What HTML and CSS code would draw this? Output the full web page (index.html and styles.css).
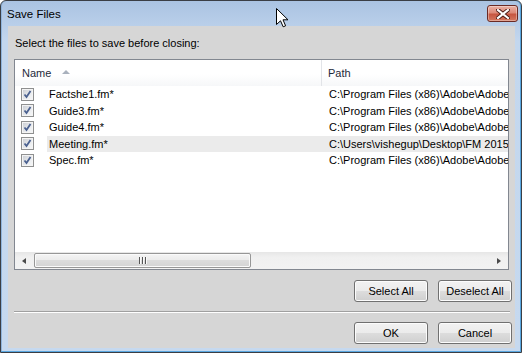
FILE: index.html
```html
<!DOCTYPE html>
<html lang="en">
<head>
  <meta charset="UTF-8">
  <title>Save Files</title>
  <link rel="stylesheet" href="styles.css">
</head>
<body>

  <div class="window">
    <div class="titlebar">
      <span class="title">Save Files</span>
      <button class="close-btn" type="button">
        <svg width="14" height="10" viewBox="0 0 14 10">
          <path d="M2 1 L12 9 M12 1 L2 9" stroke="#4a1a14" stroke-width="4" stroke-linecap="square"/>
          <path d="M2 1 L12 9 M12 1 L2 9" stroke="#fff" stroke-width="2.2" stroke-linecap="square"/>
        </svg>
      </button>
    </div>

    <div class="client">
      <p class="prompt">Select the files to save before closing:</p>

      <div class="listview">
        <div class="lv-header">
          <div class="col col-name">Name <span class="sort-arrow"></span></div>
          <div class="col col-path">Path</div>
        </div>

        <div class="lv-rows" id="rows"></div>

        <div class="hscroll">
          <span class="sb-btn sb-left"></span>
          <span class="sb-thumb">
            <svg width="8" height="7" viewBox="0 0 8 7">
              <path d="M0.5 0 V7 M3.5 0 V7 M6.5 0 V7" stroke="#555" stroke-width="1"/>
              <path d="M1.5 0 V7 M4.5 0 V7 M7.5 0 V7" stroke="#fafafa" stroke-width="1"/>
            </svg>
          </span>
          <span class="sb-track"></span>
          <span class="sb-btn sb-right"></span>
        </div>
      </div>

      <div class="btn-row">
        <button class="btn" type="button">Select All</button>
        <button class="btn" type="button">Deselect All</button>
      </div>

      <div class="sep"></div>

      <div class="btn-row">
        <button class="btn" type="button">OK</button>
        <button class="btn" type="button">Cancel</button>
      </div>
    </div>

    <!-- mouse pointer -->
    <svg class="cursor" width="13" height="20" viewBox="0 0 13 20">
      <path d="M0.5 0.5 V16.5 L4.5 12.8 L7.2 18.8 L9.6 17.8 L7 11.8 H12 Z" fill="#fff" stroke="#000" stroke-width="1" stroke-linejoin="miter"/>
    </svg>
  </div>

  <script>
    const files = [
      { name: 'Factshe1.fm*', path: 'C:\\Program Files (x86)\\Adobe\\Adobe FrameMaker 2015\\Samples\\Factshe1.fm' },
      { name: 'Guide3.fm*', path: 'C:\\Program Files (x86)\\Adobe\\Adobe FrameMaker 2015\\Samples\\Guide3.fm' },
      { name: 'Guide4.fm*', path: 'C:\\Program Files (x86)\\Adobe\\Adobe FrameMaker 2015\\Samples\\Guide4.fm' },
      { name: 'Meeting.fm*', path: 'C:\\Users\\vishegup\\Desktop\\FM 2015\\Meeting.fm', selected: true },
      { name: 'Spec.fm*', path: 'C:\\Program Files (x86)\\Adobe\\Adobe FrameMaker 2015\\Samples\\Spec.fm' }
    ];

    const rowsEl = document.getElementById('rows');

    files.forEach(f => {
      const row = document.createElement('div');
      row.className = 'lv-row' + (f.selected ? ' selected' : '');
      row.innerHTML = `
        <span class="check">
          <svg width="11" height="11" viewBox="0 0 11 11">
            <path d="M2.5 5.5 L4.5 8 L8.5 2" fill="none" stroke="#4b6190" stroke-width="1.8"/>
          </svg>
        </span>
        <div class="lv-cells">
          <span class="cell-name">${f.name}</span>
          <span class="cell-path">${f.path}</span>
        </div>
      `;
      rowsEl.appendChild(row);
    });
  </script>
</body>
</html>
```

FILE: styles.css
```css
* { box-sizing: border-box; }

body {
  margin: 0;
  font-family: "Liberation Sans", Arial, sans-serif;
  font-size: 11px;
  color: #000;
  background: #fff;
}

.window {
  position: relative;
  width: 522px;
  height: 353px;
  display: flex;
  flex-direction: column;
  border: 1px solid #3a3e45;
  border-radius: 6px 6px 0 0;
  background: linear-gradient(#aac3e2, #c3d7ee 40px, #c6d9ef);
  box-shadow: inset 0 -1px 0 #5aa7e0, inset -1px 0 0 #5aa7e0, inset 1px 0 0 #8fb4dc;
  overflow: hidden;
}

/* title bar */

.titlebar {
  height: 25px;
  display: flex;
  align-items: center;
  padding-left: 6px;
  flex-shrink: 0;
}

.title {
  font-size: 11.5px;
  color: #000;
}

.close-btn {
  margin-left: auto;
  margin-right: 3px;
  width: 31px;
  height: 17px;
  padding: 0;
  border: 1px solid #6b2a24;
  border-radius: 3px;
  background: linear-gradient(#eab0a3, #dd8a78 45%, #c75640 55%, #d4785f);
  box-shadow: inset 0 0 0 1px rgba(255, 255, 255, 0.35);
  display: flex;
  align-items: center;
  justify-content: center;
}

/* client area */

.client {
  height: 322px;
  margin: 0 6px 0 7px;
  padding: 0 6px;
  background: #d6d6d6;
  display: flex;
  flex-direction: column;
}

.prompt {
  margin: 0;
  padding: 11px 0 9px 1px;
  line-height: 13px;
  white-space: nowrap;
}

/* list view */

.listview {
  height: 211px;
  border: 1px solid #828790;
  background: #fff;
  display: flex;
  flex-direction: column;
  overflow: hidden;
}

.lv-header {
  height: 26px;
  display: flex;
  flex-shrink: 0;
  background: linear-gradient(#fff, #fff 55%, #f6f7f9);
  color: #1e2a3a;
}

.col {
  display: flex;
  align-items: center;
  white-space: nowrap;
}

.col-name {
  width: 307px;
  padding-left: 7px;
  border-right: 1px solid #e2e4e8;
}

.col-path {
  padding-left: 6px;
}

.sort-arrow {
  margin-left: 11px;
  margin-top: -3px;
  width: 0;
  height: 0;
  border-left: 4px solid transparent;
  border-right: 4px solid transparent;
  border-bottom: 4px solid #a9b1bd;
}

.lv-rows {
  flex: 1;
}

.lv-row {
  height: 16.5px;
  display: flex;
  align-items: center;
}

.check {
  margin-left: 6px;
  margin-right: 13px;
  width: 13px;
  height: 13px;
  border: 1px solid #8f9090;
  background: linear-gradient(135deg, #c9ccd2, #eef0f2 70%, #f7f7f7);
  box-shadow: inset 0 0 0 1px #f4f4f4;
  display: flex;
  align-items: center;
  justify-content: center;
  flex-shrink: 0;
}

.lv-cells {
  flex: 1;
  height: 100%;
  display: flex;
  align-items: center;
  min-width: 0;
}

.lv-row.selected .lv-cells {
  background: #ebebeb;
}

.cell-name {
  width: 275px;
  padding-left: 2px;
  flex-shrink: 0;
  white-space: nowrap;
}

.cell-path {
  padding-left: 7px;
  white-space: nowrap;
  overflow: hidden;
}

/* horizontal scroll bar */

.hscroll {
  height: 17px;
  display: flex;
  flex-shrink: 0;
  background: linear-gradient(#e6e6e6, #f0f0f0 30%, #f2f2f2);
}

.sb-btn {
  width: 18px;
  display: flex;
  align-items: center;
  justify-content: center;
  flex-shrink: 0;
}

.sb-left::before,
.sb-right::before {
  content: "";
  width: 0;
  height: 0;
  border-top: 3.5px solid transparent;
  border-bottom: 3.5px solid transparent;
}

.sb-left::before {
  border-right: 4px solid #4a4a4a;
}

.sb-right::before {
  border-left: 4px solid #4a4a4a;
}

.sb-thumb {
  margin: 1px 0 1px 1px;
  width: 217px;
  border: 1px solid #979797;
  border-radius: 2px;
  background: linear-gradient(#f4f4f4, #ebebeb 50%, #dcdcdc 50%, #d4d4d4);
  box-shadow: inset 0 0 0 1px #fafafa;
  display: flex;
  align-items: center;
  justify-content: center;
}

.sb-track {
  flex: 1;
}

/* buttons */

.btn-row {
  margin-top: 10px;
  margin-right: -3px;
  display: flex;
  justify-content: flex-end;
  gap: 10px;
}

.sep + .btn-row {
  margin-top: 9px;
}

.btn {
  width: 74px;
  height: 22px;
  padding: 0;
  font-family: "Liberation Sans", Arial, sans-serif;
  font-size: 11px;
  color: #000;
  border: 1px solid #707070;
  border-radius: 3px;
  background: linear-gradient(#f2f2f2, #ebebeb 50%, #dddddd 50%, #cfcfcf);
  box-shadow: inset 0 0 0 1px #fcfcfc;
}

.sep {
  margin-top: 9px;
  margin-right: -1px;
  height: 2px;
  border-top: 1px solid #a0a0a0;
  border-bottom: 1px solid #fff;
}

.cursor {
  position: absolute;
  left: 275px;
  top: 7px;
}
```
